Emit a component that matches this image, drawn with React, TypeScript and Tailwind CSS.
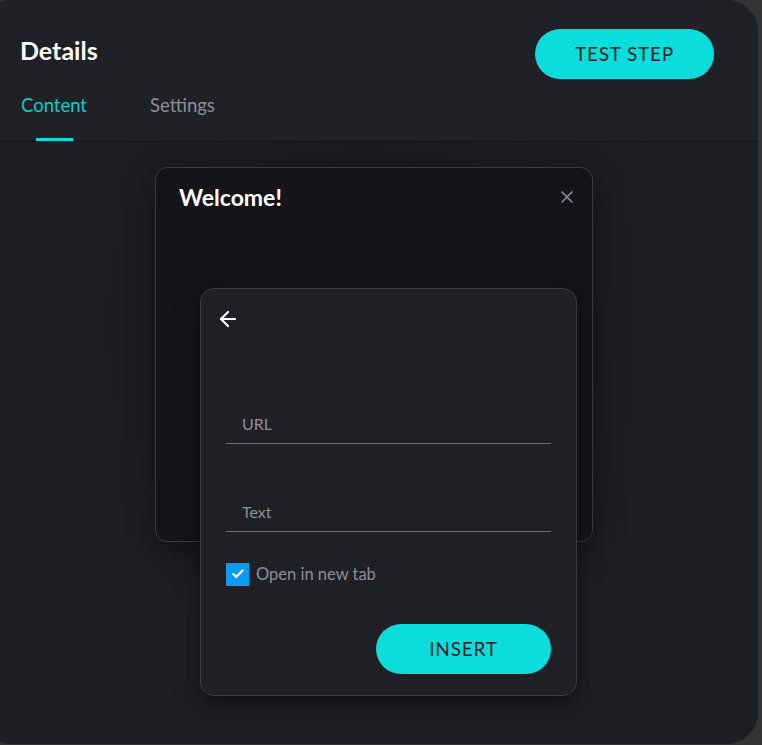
import { X, ArrowLeft, Check } from 'lucide-react'

const font = { fontFamily: 'Lato, "Noto Sans", sans-serif' }

export default function App() {
  return (
    <div className="h-[745px] w-[762px] overflow-hidden bg-[#343434]" style={font}>
      <div className="ml-[-20px] flex h-[744px] w-[778px] flex-col overflow-hidden rounded-[32px] bg-[#1f2025]">
        {/* header */}
        <div className="bg-[#202127] pl-[40px] pr-[44px]">
          <div className="flex items-start justify-between pt-[29px]">
            <h2 className="pt-[7px] text-[25px] font-bold leading-[28px] text-white">Details</h2>
            <button className="h-[50px] w-[179px] rounded-full bg-[#0bdcdc] text-[19px] tracking-[0.8px] text-[#1b1c20]">
              TEST STEP
            </button>
          </div>
          <div className="mt-[14px] flex gap-[62px]">
            <div className="flex w-[68px] flex-col items-center">
              <span className="whitespace-nowrap text-[18.5px] leading-[24px] text-[#12c8cc]">Content</span>
              <div className="mt-[21px] h-[3px] w-[37px] bg-[#0bdcdc]" />
            </div>
            <span className="whitespace-nowrap text-[18.5px] leading-[24px] text-[#8d8e99]">Settings</span>
          </div>
        </div>
        <div className="h-px bg-[#141519]" />

        {/* body */}
        <div className="flex-1 bg-[radial-gradient(ellipse_at_50%_30%,#17181c_0%,#1e1f24_60%)] pl-[175px] pt-[25px]">
          <div className="relative h-[375px] w-[438px]">
            <div className="h-full w-full rounded-[12px] border border-[#3a3b41] bg-[#141519] px-[23px] pt-[12px] shadow-[0_10px_30px_rgba(0,0,0,0.4)]">
              <div className="flex items-center justify-between">
                <h3 className="text-[23px] font-bold text-white">Welcome!</h3>
                <X size={20} strokeWidth={2} className="mr-[-8px] text-[#8a8c96]" />
              </div>
            </div>

            <div className="absolute left-[45px] top-[121px] flex h-[408px] w-[377px] flex-col rounded-[14px] border border-[#3a3b41] bg-[#1f2026] px-[25px] pt-[18px] shadow-[0_8px_24px_rgba(0,0,0,0.45)]">
              <ArrowLeft size={24} strokeWidth={2.2} className="ml-[-10px] text-white" />
              <div className="mt-[81px] border-b border-[#6c6d79] pb-[7px] pl-[16px] text-[16px] leading-[24px] text-[#8d8e99]">URL</div>
              <div className="mt-[56px] border-b border-[#6c6d79] pb-[7px] pl-[16px] text-[16px] leading-[24px] text-[#8d8e99]">Text</div>
              <label className="mt-[30px] flex items-center gap-[7px]">
                <span className="flex h-[23px] w-[23px] items-center justify-center bg-[#0a9bf5]">
                  <Check size={14} strokeWidth={4} className="text-white" />
                </span>
                <span className="text-[16.5px] text-[#8d8e99]">Open in new tab</span>
              </label>
              <div className="mt-[37px] flex justify-end">
                <button className="h-[50px] w-[175px] rounded-full bg-[#0bdcdc] text-[19px] tracking-[0.8px] text-[#1b1c20]">
                  INSERT
                </button>
              </div>
            </div>
          </div>
        </div>
      </div>
    </div>
  )
}
